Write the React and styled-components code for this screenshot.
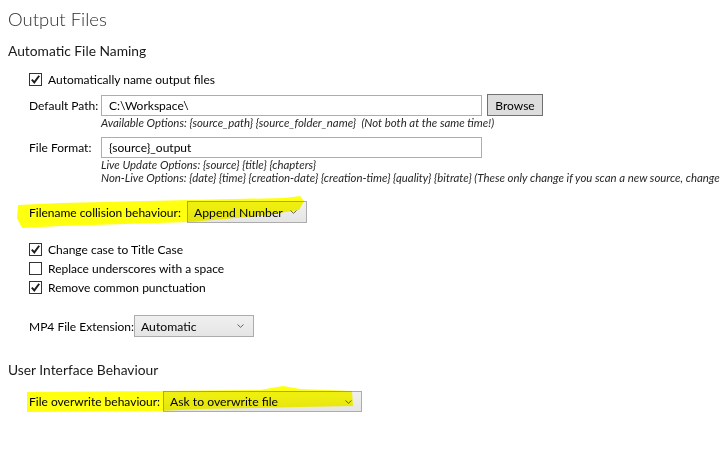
import React from "react"
import styled, { createGlobalStyle } from "styled-components"

const GlobalStyle = createGlobalStyle`
  html, body {
    margin: 0;
    padding: 0;
    background: #ffffff;
  }
  body {
    font-family: "Segoe UI", Lato, "Liberation Sans", sans-serif;
    font-size: 12px;
    color: #000;
  }
`

const Check = () => (
  <svg width="11" height="11" viewBox="0 0 11 11">
    <path d="M1.8 5.6 L4.3 8.4 L9.2 1.8" fill="none" stroke="#1c1c1c" strokeWidth="1.9" />
  </svg>
)

const Chevron = () => (
  <svg width="7" height="4" viewBox="0 0 7 4">
    <path d="M0.5 0.5 L3.5 3.3 L6.5 0.5" fill="none" stroke="#606060" strokeWidth="1" />
  </svg>
)

const App = () => {
  return (
    <Page>
      <GlobalStyle />
      <Title>Output Files</Title>

      <Heading $top={9}>Automatic File Naming</Heading>
      <Indent>
        <CheckRow $top={9}>
          <Box><Check /></Box>
          Automatically name output files
        </CheckRow>

        <FieldRow $top={6}>
          <Label $width={72}>Default Path:</Label>
          <TextBox>C:\Workspace\</TextBox>
          <Button>Browse</Button>
        </FieldRow>
        <Hint>Available Options: {"{source_path} {source_folder_name}"}&nbsp; (Not both at the same time!)</Hint>

        <FieldRow $top={8}>
          <Label $width={72}>File Format:</Label>
          <TextBox>{"{source}_output"}</TextBox>
        </FieldRow>
        <Hint>Live Update Options: {"{source} {title} {chapters}"}</Hint>
        <Hint>
          Non-Live Options: {"{date} {time} {creation-date} {creation-time} {quality} {bitrate}"} (These only change if you scan a new source, change the title or chapters)
        </Hint>

        <FieldRow $top={17}>
          <Mark $left={-12} $top={-5} width="290" height="34" viewBox="-12 -5 290 34">
            <path d="M-11 4 L31 2 L161 -1 L256 -3 L271 -5 L275 0 L270 9 L231 15 L161 21 L31 25 L-7 27 L-12 17 Z" />
          </Mark>
          <Label $width={158}>Filename collision behaviour:</Label>
          <Select $width={120} $height={22}>
            Append Number
            <Chevron />
          </Select>
        </FieldRow>

        <Checks>
          <CheckRow>
            <Box><Check /></Box>
            Change case to Title Case
          </CheckRow>
          <CheckRow>
            <Box />
            Replace underscores with a space
          </CheckRow>
          <CheckRow>
            <Box><Check /></Box>
            Remove common punctuation
          </CheckRow>
        </Checks>

        <FieldRow $top={18}>
          <Label $width={105}>MP4 File Extension:</Label>
          <Select $width={120} $height={22}>
            Automatic
            <Chevron />
          </Select>
        </FieldRow>
      </Indent>

      <Heading $top={23}>User Interface Behaviour</Heading>
      <Indent>
        <FieldRow $top={11}>
          <Mark $left={-3} $top={-6} width="330" height="30" viewBox="-3 -6 330 30">
            <path d="M-2 1 L131 0 L231 -1 L254 -5 L271 -2 L323 0 L324 15 L271 16 L171 18 L131 20 L-2 21 Z" />
          </Mark>
          <Label $width={134}>File overwrite behaviour:</Label>
          <Select $width={199} $height={21}>
            Ask to overwrite file
            <Chevron />
          </Select>
        </FieldRow>
      </Indent>
    </Page>
  )
}

export default App

const Page = styled.div`
  padding-left: 8px;
  width: 722px;
  height: 470px;
  overflow: hidden;
  box-sizing: border-box;
`

const Title = styled.div`
  margin-top: 6px;
  font-size: 18.5px;
  font-weight: 300;
  line-height: 26px;
  color: #2a2a2a;
`

const Heading = styled.div`
  margin-top: ${p => p.$top}px;
  font-size: 13.8px;
  line-height: 20px;
  color: #1a1a1a;
`

const Indent = styled.div`
  padding-left: 21px;
`

const CheckRow = styled.div`
  margin-top: ${p => p.$top || 0}px;
  display: flex;
  align-items: center;
  gap: 6px;
  height: 19px;
  white-space: nowrap;
`

const Box = styled.span`
  width: 11px;
  height: 11px;
  border: 1px solid #333;
  background: #fff;
  display: flex;
  align-items: center;
  justify-content: center;
`

const Checks = styled.div`
  margin-top: 17px;
`

const FieldRow = styled.div`
  position: relative;
  margin-top: ${p => p.$top}px;
  display: flex;
  align-items: center;
  white-space: nowrap;
`

const Label = styled.span`
  position: relative;
  z-index: 1;
  width: ${p => p.$width}px;
  flex: none;
`

const TextBox = styled.div`
  box-sizing: border-box;
  width: 381px;
  height: 21px;
  border: 1px solid #abadb3;
  padding: 0 7px;
  display: flex;
  align-items: center;
  background: #fff;
`

const Button = styled.div`
  box-sizing: border-box;
  margin-left: 5px;
  margin-top: -1px;
  width: 56px;
  height: 22px;
  border: 1px solid #707070;
  background: #dddddd;
  display: flex;
  align-items: center;
  justify-content: center;
`

const Select = styled.div`
  box-sizing: border-box;
  width: ${p => p.$width}px;
  height: ${p => p.$height}px;
  border: 1px solid #acacac;
  background: linear-gradient(#f0f0f0, #e5e5e5);
  padding: 0 9px 0 6px;
  display: flex;
  align-items: center;
  justify-content: space-between;
  font-size: 12.2px;
`

const Hint = styled.div`
  padding-left: 72px;
  font-size: 11.4px;
  font-style: italic;
  line-height: 13px;
  color: #262626;
  white-space: nowrap;
`

const Mark = styled.svg`
  position: absolute;
  left: ${p => p.$left}px;
  top: ${p => p.$top}px;
  z-index: 2;
  pointer-events: none;
  mix-blend-mode: multiply;
  fill: #ffff10;
`
